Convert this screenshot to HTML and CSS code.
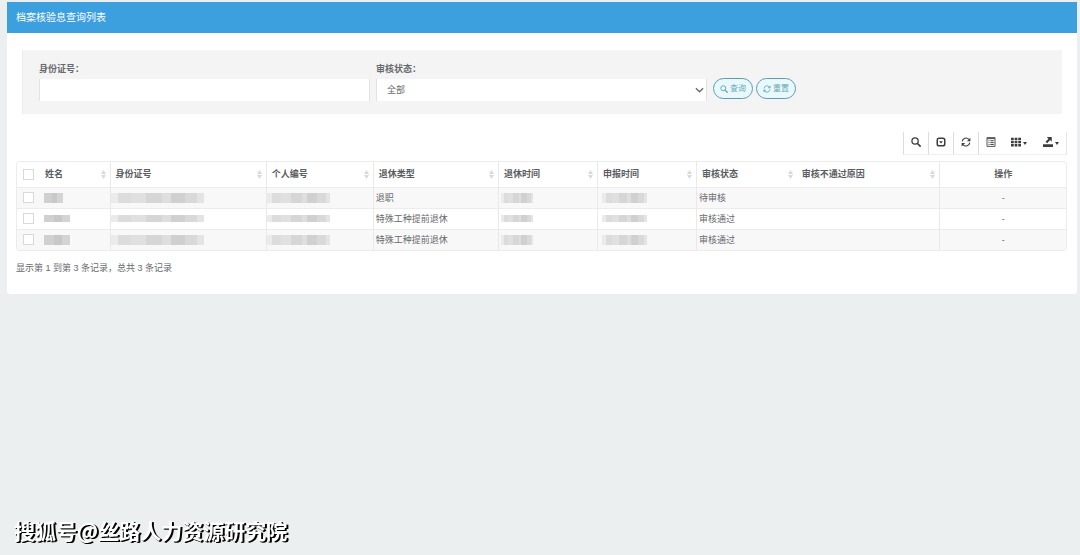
FILE: index.html
```html
<!DOCTYPE html>
<html lang="zh-CN">
<head>
    <meta charset="UTF-8">
    <meta name="viewport" content="width=device-width, initial-scale=1.0">
    <title>档案核验息查询列表</title>
    <link rel="stylesheet" href="styles.css">
</head>
<body>
    <svg class="icon-defs" aria-hidden="true">
        <symbol id="icon-search" viewBox="0 0 16 16">
            <circle cx="6.5" cy="6.5" r="5" fill="none" stroke="currentColor" stroke-width="2"/>
            <path d="M10.4 10.4l4.2 4.2" stroke="currentColor" stroke-width="2.6" stroke-linecap="round"/>
        </symbol>
        <symbol id="icon-refresh" viewBox="0 0 16 16">
            <path d="M2 7a6 6 0 0 1 10.6-3.2M14 9a6 6 0 0 1-10.6 3.2" fill="none" stroke="currentColor" stroke-width="1.8"/>
            <path d="M15 1v5.6H9.4zM1 15V9.4h5.6z" fill="currentColor"/>
        </symbol>
        <symbol id="icon-toggle" viewBox="0 0 16 16">
            <rect x="2" y="2" width="12" height="12" rx="3" fill="none" stroke="currentColor" stroke-width="2.4"/>
            <path d="M4.8 6.6h6.4L8 10.4z" fill="currentColor"/>
        </symbol>
        <symbol id="icon-list" viewBox="0 0 16 16">
            <path d="M1.6 1h12.8v14H1.6z" fill="none" stroke="currentColor" stroke-width="1.4"/>
            <path d="M2 2.6h12M4 6h1.6M7 6h5.4M4 9h1.6M7 9h5.4M4 12h1.6M7 12h5.4" stroke="currentColor" stroke-width="1.5"/>
        </symbol>
        <symbol id="icon-grid" viewBox="0 0 16 16">
            <path d="M0 1h4.4v3.8H0zM5.8 1h4.4v3.8H5.8zM11.6 1H16v3.8h-4.4zM0 6.1h4.4v3.8H0zM5.8 6.1h4.4v3.8H5.8zM11.6 6.1H16v3.8h-4.4zM0 11.2h4.4V15H0zM5.8 11.2h4.4V15H5.8zM11.6 11.2H16V15h-4.4z" fill="currentColor"/>
        </symbol>
        <symbol id="icon-export" viewBox="0 0 16 16">
            <path d="M0 11.5h16V16H0zM6 0h8v7.4l-2.6-2.5L6.6 10 4 7.6l4.8-4.9z" fill="currentColor"/>
        </symbol>
    </svg>

    <main class="panel">
        <h1 class="panel-header">档案核验息查询列表</h1>
        <div class="panel-body">
            <form class="search-box">
                <div class="field">
                    <label for="idCard">身份证号：</label>
                    <input type="text" id="idCard">
                </div>
                <div class="field">
                    <label for="status">审核状态：</label>
                    <div class="select-wrap">
                        <select id="status">
                            <option>全部</option>
                            <option>待审核</option>
                            <option>审核通过</option>
                        </select>
                        <svg class="arrow" viewBox="0 0 10 6" aria-hidden="true"><path d="M1 1l4 4 4-4" fill="none" stroke="currentColor" stroke-width="1.4"/></svg>
                    </div>
                </div>
                <div class="actions">
                    <button type="button" class="btn-round"><svg><use href="#icon-search"/></svg>查询</button>
                    <button type="button" class="btn-round"><svg><use href="#icon-refresh"/></svg>重置</button>
                </div>
            </form>

            <div class="toolbar">
                <button type="button" aria-label="搜索"><svg><use href="#icon-search"/></svg></button>
                <button type="button" aria-label="分页切换"><svg><use href="#icon-toggle"/></svg></button>
                <button type="button" aria-label="刷新"><svg><use href="#icon-refresh"/></svg></button>
                <button type="button" aria-label="切换视图"><svg><use href="#icon-list"/></svg></button>
                <button type="button" class="drop" aria-label="列"><svg><use href="#icon-grid"/></svg><span class="caret"></span></button>
                <button type="button" class="drop" aria-label="导出"><svg><use href="#icon-export"/></svg><span class="caret"></span></button>
            </div>

            <div class="table-wrap">
                <table>
                    <colgroup>
                        <col class="col-check">
                        <col class="col-name">
                        <col class="col-id">
                        <col class="col-number">
                        <col class="col-type">
                        <col class="col-date">
                        <col class="col-date">
                        <col class="col-status">
                        <col class="col-reason">
                        <col class="col-action">
                    </colgroup>
                    <thead>
                        <tr>
                            <th class="check"><input type="checkbox" aria-label="全选"></th>
                            <th class="sortable">姓名</th>
                            <th class="sortable">身份证号</th>
                            <th class="sortable">个人编号</th>
                            <th class="sortable">退休类型</th>
                            <th class="sortable">退休时间</th>
                            <th class="sortable">申报时间</th>
                            <th class="sortable plain">审核状态</th>
                            <th class="sortable">审核不通过原因</th>
                            <th class="center">操作</th>
                        </tr>
                    </thead>
                    <tbody>
                        <tr>
                            <td class="check"><input type="checkbox" aria-label="选择第 1 行"></td>
                            <td class="name"><span class="mask mask-short"></span></td>
                            <td class="masked"><span class="mask mask-id"></span></td>
                            <td class="masked"><span class="mask mask-number"></span></td>
                            <td>退职</td>
                            <td><span class="mask mask-month"></span></td>
                            <td class="name"><span class="mask mask-date"></span></td>
                            <td class="plain">待审核</td>
                            <td></td>
                            <td class="center">-</td>
                        </tr>
                        <tr>
                            <td class="check"><input type="checkbox" aria-label="选择第 2 行"></td>
                            <td class="name"><span class="mask mask-name"></span></td>
                            <td class="masked"><span class="mask mask-id"></span></td>
                            <td class="masked"><span class="mask mask-number"></span></td>
                            <td>特殊工种提前退休</td>
                            <td><span class="mask mask-month"></span></td>
                            <td class="name"><span class="mask mask-date"></span></td>
                            <td class="plain">审核通过</td>
                            <td></td>
                            <td class="center">-</td>
                        </tr>
                        <tr>
                            <td class="check"><input type="checkbox" aria-label="选择第 3 行"></td>
                            <td class="name"><span class="mask mask-name"></span></td>
                            <td class="masked"><span class="mask mask-id"></span></td>
                            <td class="masked"><span class="mask mask-number"></span></td>
                            <td>特殊工种提前退休</td>
                            <td><span class="mask mask-month"></span></td>
                            <td class="name"><span class="mask mask-date"></span></td>
                            <td class="plain">审核通过</td>
                            <td></td>
                            <td class="center">-</td>
                        </tr>
                    </tbody>
                </table>
            </div>
            <p class="page-info">显示第 1 到第 3 条记录，总共 3 条记录</p>
        </div>
    </main>

    <div class="watermark">搜狐号@丝路人力资源研究院</div>
</body>
</html>
```

FILE: styles.css
```css
* {
    box-sizing: border-box;
}

body {
    margin: 0;
    padding: 2px 3px 0 7px;
    min-height: 100vh;
    font-family: "Liberation Sans", "Noto Sans CJK SC", sans-serif;
    font-size: 9px;
    line-height: 12px;
    color: #676a6c;
    background: #ebeff0;
}

button,
input,
select {
    font: inherit;
    color: inherit;
    margin: 0;
}

svg {
    display: block;
    width: 10px;
    height: 10px;
}

.icon-defs {
    position: absolute;
    width: 0;
    height: 0;
}

.panel {
    background: #fff;
    border-radius: 3px;
}

.panel-header {
    margin: 0;
    padding: 8px 9px;
    font-size: 10px;
    line-height: 15px;
    font-weight: 400;
    color: #fff;
    background: #3c9fde;
}

.panel-body {
    padding: 17px 10px 20px 9px;
}

/* search form */
.search-box {
    display: flex;
    align-items: flex-end;
    gap: 6px;
    margin: 0 5px 0 6px;
    padding: 13px 16px;
    background: #f4f4f4;
    border-left: 1px solid #ececec;
}

.field {
    flex: 0 1 331px;
}

.field label {
    display: block;
    margin-bottom: 4px;
    font-weight: 700;
}

.field input,
.field select {
    display: block;
    width: 100%;
    height: 22px;
    padding: 0 10px;
    background: #fff;
    border: 1px solid #e2e2e2;
    border-width: 0 1px;
    border-radius: 0;
    appearance: none;
}

.select-wrap {
    position: relative;
}

.arrow {
    position: absolute;
    top: 8px;
    right: 3px;
    width: 9px;
    height: 6px;
    pointer-events: none;
}

.actions {
    display: flex;
    gap: 3px;
    padding-bottom: 2px;
}

.btn-round {
    display: flex;
    align-items: center;
    justify-content: center;
    gap: 2px;
    width: 40px;
    height: 21px;
    padding: 0;
    font-size: 8px;
    color: #69a9b9;
    background: #e9f9fb;
    border: 1px solid #5a9db2;
    border-radius: 11px;
}

.btn-round svg {
    width: 8px;
    height: 8px;
}

/* table toolbar */
.toolbar {
    display: flex;
    justify-content: flex-end;
    margin: 18px 0 6px;
}

.toolbar button {
    display: flex;
    align-items: center;
    justify-content: center;
    gap: 2px;
    width: 25px;
    height: 23px;
    padding: 0 1px 2px 0;
    color: #3c3c3c;
    background: #fff;
    border: 0;
    border-left: 1px solid #dcdcdc;
    border-bottom: 1px solid #f0f0f0;
}

.toolbar .drop {
    width: 32px;
    border-left-color: #fff;
}

.toolbar .drop:last-child {
    border-right: 1px solid #e4e4e4;
}

.caret {
    margin-top: 2px;
    border: 2px solid transparent;
    border-top: 3px solid #3c3c3c;
    border-bottom: 0;
}

/* records */
.table-wrap {
    border: 1px solid #ececec;
    border-radius: 3px;
    overflow: hidden;
}

table {
    width: 100%;
    table-layout: fixed;
    border-collapse: collapse;
}

.col-check { width: 23px; }
.col-name { width: 70px; }
.col-id { width: 156px; }
.col-number { width: 107px; }
.col-type { width: 125px; }
.col-date { width: 99px; }
.col-status { width: 100px; }
.col-reason { width: 143px; }
.col-action { width: 126px; }

th,
td {
    height: 21px;
    padding: 0 2px;
    text-align: left;
    font-weight: 400;
    border-right: 1px solid #e9e9e9;
}

th {
    height: 25px;
    padding: 0 5px;
    font-weight: 700;
    color: #5a5d5f;
}

tbody tr {
    border-top: 1px solid #ececec;
}

tbody tr:nth-child(odd) {
    background: #f8f8f8;
}

th.check,
td.check,
th.plain,
td.plain {
    border-right: 0;
}

th:last-child,
td:last-child {
    border-right: 0;
}

th.center,
td.center {
    text-align: center;
}

.check {
    padding: 0 6px;
}

td.name {
    padding-left: 4px;
}

td.masked {
    padding-left: 0;
}

.check input {
    display: block;
    width: 11px;
    height: 11px;
    background: #fff;
    border: 1px solid #d9d9d9;
    appearance: none;
}

.sortable {
    background: url("data:image/svg+xml,%3Csvg xmlns='http://www.w3.org/2000/svg' width='5' height='9'%3E%3Cpath d='M0 4l2.5-4L5 4zM0 5l2.5 4L5 5z' fill='%23dadada'/%3E%3C/svg%3E") no-repeat right 4px center;
}

/* pixelated personal data */
.mask {
    display: block;
    height: 10px;
    background: linear-gradient(90deg, #ebebeb 0 8%, #dcdcdc 8% 22%, #e0e0e0 22% 38%, #d6d6d6 38% 55%, #dedede 55% 64%, #d0d0d0 64% 80%, #d9d9d9 80% 93%, #e4e4e4 93%);
}

tr:nth-child(2) .mask {
    height: 7px;
}

.mask-short { width: 19px; }
.mask-name { width: 26px; }
.mask-id { width: 93px; }
.mask-number { width: 63px; }
.mask-month { width: 32px; }
.mask-date { width: 45px; }

td .mask-short,
td .mask-name {
    background: linear-gradient(90deg, #d0d0d0 0 40%, #c8c8c8 40% 70%, #d4d4d4 70%);
}

.page-info {
    margin: 11px 0 0;
}

.watermark {
    position: fixed;
    left: 14px;
    bottom: 10px;
    font-size: 21px;
    line-height: 30px;
    font-weight: 700;
    font-family: "Noto Sans CJK SC", sans-serif;
    color: #fff;
    text-shadow: 1px 1px 0 #000, 2px 1px 0 #000;
}
```
